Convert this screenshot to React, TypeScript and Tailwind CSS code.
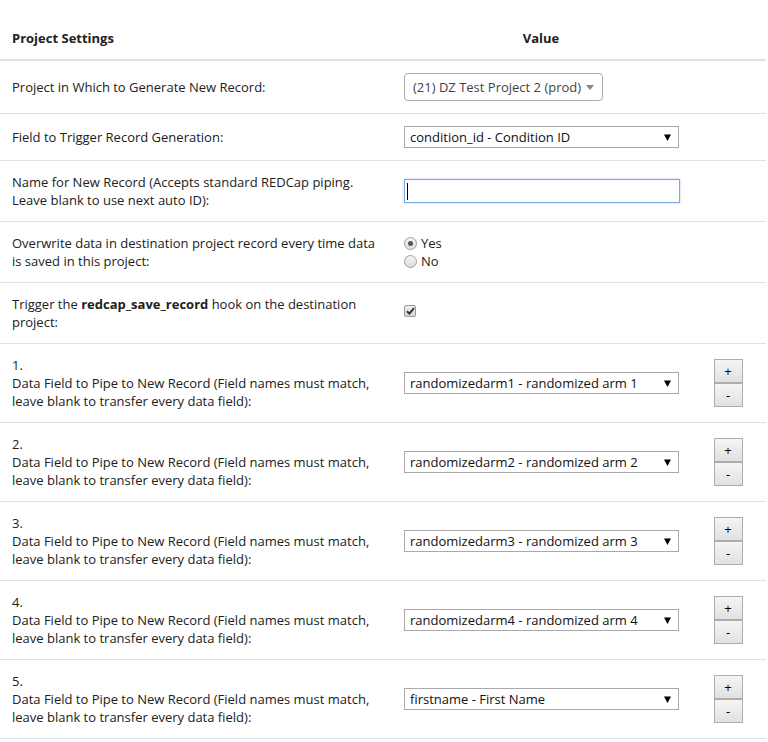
import React from "react";

const fields = [
  "randomizedarm1 - randomized arm 1",
  "randomizedarm2 - randomized arm 2",
  "randomizedarm3 - randomized arm 3",
  "randomizedarm4 - randomized arm 4",
  "firstname - First Name",
];

const Caret = ({ color = "#000" }: { color?: string }) => (
  <svg width="7" height="7" viewBox="0 0 7 7" className="shrink-0">
    <polygon points="0,0.5 7,0.5 3.5,7" fill={color} />
  </svg>
);

const FakeSelect = ({ text, width = "w-[275px]" }: { text: string; width?: string }) => (
  <div
    className={`${width} h-[22px] flex items-center justify-between border border-[#a9a9a9] bg-white pl-[5px] pr-[7px] text-[#111]`}
  >
    <span className="truncate">{text}</span>
    <Caret />
  </div>
);

const Radio = ({ checked }: { checked?: boolean }) => (
  <span className="w-[13px] h-[13px] rounded-full border border-[#a0a0a0] bg-gradient-to-b from-[#f4f4f4] to-[#dcdcdc] flex items-center justify-center shrink-0">
    {checked && <span className="w-[5px] h-[5px] rounded-full bg-[#555]" />}
  </span>
);

const PlusMinus = () => (
  <div className="flex flex-col items-center">
    {["+", "-"].map((s) => (
      <button
        key={s}
        type="button"
        className="w-[29px] h-[24px] border border-[#adadad] bg-gradient-to-b from-[#f5f5f5] to-[#e1e1e1] text-[13px] leading-none text-black flex items-center justify-center"
      >
        {s}
      </button>
    ))}
  </div>
);

const td = "border-b border-[#dee2e6] px-3 py-3 align-middle";

export default function App() {
  return (
    <div className="bg-white min-h-screen font-['Open_Sans',sans-serif] text-[13px] leading-[18px] text-[#212121]">
      <table className="table-fixed border-collapse w-[766px]">
        <colgroup>
          <col className="w-[392px]" />
          <col className="w-[298px]" />
          <col className="w-[76px]" />
        </colgroup>
        <thead>
          <tr>
            <th className="border-b-2 border-[#dee2e6] px-3 pt-[29px] pb-3 text-left font-bold">Project Settings</th>
            <th className="border-b-2 border-[#dee2e6] px-3 pt-[29px] pb-3 text-center font-bold">Value</th>
            <th className="border-b-2 border-[#dee2e6]"></th>
          </tr>
        </thead>
        <tbody>
          <tr>
            <td className={td}>Project in Which to Generate New Record:</td>
            <td className={td}>
              <div className="w-[199px] h-[28px] flex items-center justify-between rounded-[4px] border border-[#aaa] bg-white pl-[8px] pr-[8px] text-[#444]">
                <span className="whitespace-nowrap">(21) DZ Test Project 2 (prod)</span>
                <svg width="8" height="5" viewBox="0 0 8 5" className="shrink-0">
                  <polygon points="0,0 8,0 4,5" fill="#888" />
                </svg>
              </div>
            </td>
            <td className={td}></td>
          </tr>
          <tr>
            <td className={td}>Field to Trigger Record Generation:</td>
            <td className={td}>
              <FakeSelect text="condition_id - Condition ID" width="w-[275px]" />
            </td>
            <td className={td}></td>
          </tr>
          <tr>
            <td className={td}>
              Name for New Record (Accepts standard REDCap piping. Leave blank to use next auto ID):
            </td>
            <td className={td}>
              <div className="w-[276px] h-[24px] border border-[#7fa8e6] shadow-[0_0_2px_#a9c7f2] bg-white flex items-center pl-[2px]">
                <span className="w-px h-[17px] bg-black" />
              </div>
            </td>
            <td className={td}></td>
          </tr>
          <tr>
            <td className={td}>Overwrite data in destination project record every time data is saved in this project:</td>
            <td className={td}>
              <div className="flex flex-col">
                <label className="flex items-center gap-[4px]">
                  <Radio checked />
                  <span>Yes</span>
                </label>
                <label className="flex items-center gap-[4px]">
                  <Radio />
                  <span>No</span>
                </label>
              </div>
            </td>
            <td className={td}></td>
          </tr>
          <tr>
            <td className={td}>
              Trigger the <b>redcap_save_record</b> hook on the destination project:
            </td>
            <td className={td}>
              <span className="w-[12px] h-[12px] border border-[#9a9a9a] rounded-[2px] bg-gradient-to-b from-[#eee] to-[#d6d6d6] flex items-center justify-center -mt-[5px]">
                <svg width="9" height="8" viewBox="0 0 9 8">
                  <path d="M1 4.2 L3.4 6.6 L8 1.2" stroke="#333" strokeWidth="2" fill="none" />
                </svg>
              </span>
            </td>
            <td className={td}></td>
          </tr>
          {fields.map((f, i) => (
            <tr key={f}>
              <td className={td}>
                {i + 1}.
                <br />
                Data Field to Pipe to New Record (Field names must match, leave blank to transfer every data field):
              </td>
              <td className={td}>
                <FakeSelect text={f} width="w-[275px]" />
              </td>
              <td className={td}>
                <PlusMinus />
              </td>
            </tr>
          ))}
        </tbody>
      </table>
    </div>
  );
}
